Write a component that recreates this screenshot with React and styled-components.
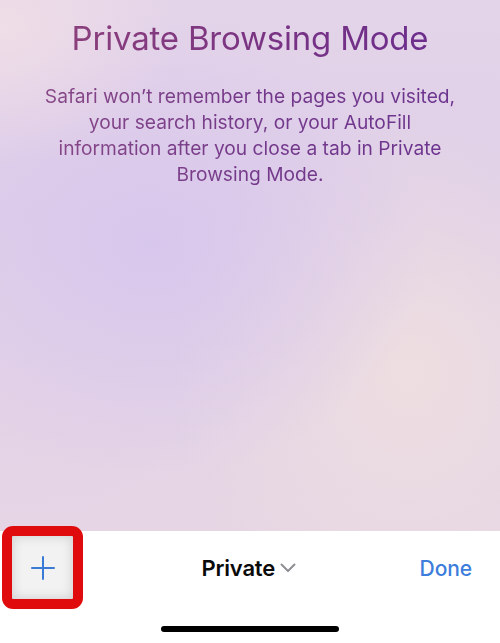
import React from "react";
import styled, { createGlobalStyle } from "styled-components";

const GlobalStyle = createGlobalStyle`
  html, body {
    margin: 0;
    padding: 0;
    background: #ffffff;
  }
  body {
    font-family: 'Inter', 'Liberation Sans', sans-serif;
  }
`;

const Screen = styled.div`
  width: 500px;
  height: 643px;
  display: flex;
  flex-direction: column;
  overflow: hidden;
  position: relative;
`;

const Backdrop = styled.div`
  flex: 1;
  display: flex;
  flex-direction: column;
  align-items: center;
  padding-top: 16px;
  background:
    radial-gradient(ellipse 180px 140px at 0% 5%, rgba(240, 222, 230, 0.9), rgba(240, 222, 230, 0) 100%),
    radial-gradient(ellipse 280px 230px at 30% 46%, rgba(216, 199, 236, 1), rgba(216, 199, 236, 0) 100%),
    radial-gradient(ellipse 240px 260px at 82% 70%, rgba(238, 222, 224, 1), rgba(238, 222, 224, 0) 100%),
    radial-gradient(ellipse 200px 160px at 0% 78%, rgba(228, 210, 230, 0.9), rgba(228, 210, 230, 0) 100%),
    linear-gradient(180deg, #e4d4e9 0%, #dfcfe8 40%, #e6d6e4 100%);
`;

const Title = styled.h1`
  margin: 0;
  font-size: 33px;
  font-weight: 400;
  line-height: 44px;
  letter-spacing: -0.2px;
  background: linear-gradient(90deg, #8a3f7c 0%, #7a3482 50%, #6c2d8c 100%);
  -webkit-background-clip: text;
  background-clip: text;
  color: transparent;
`;

const Message = styled.p`
  margin: 23px 0 0;
  width: 480px;
  text-align: center;
  font-size: 19.2px;
  line-height: 26px;
  font-weight: 400;
  background: linear-gradient(90deg, #8a4a86 0%, #74398a 50%, #6a3390 100%);
  -webkit-background-clip: text;
  background-clip: text;
  color: transparent;
`;

const Toolbar = styled.div`
  height: 112px;
  background: #ffffff;
  display: flex;
  flex-direction: column;
  align-items: center;
`;

const ToolRow = styled.div`
  width: 100%;
  height: 74px;
  display: flex;
  align-items: center;
  justify-content: space-between;
  padding: 0 28px 0 24px;
  box-sizing: border-box;
`;

const IconButton = styled.button`
  width: 34px;
  height: 34px;
  border: none;
  background: none;
  padding: 0;
`;

const GroupPicker = styled.div`
  display: flex;
  align-items: center;
  gap: 5px;
  margin-left: 20px;
`;

const GroupLabel = styled.span`
  font-size: 22px;
  font-weight: 600;
  color: #0a0a0a;
  letter-spacing: -0.2px;
`;

const DoneButton = styled.span`
  font-size: 21px;
  font-weight: 500;
  color: #3d7ddb;
  letter-spacing: -0.1px;
`;

const HomeIndicator = styled.div`
  margin-top: 21px;
  width: 178px;
  height: 6px;
  border-radius: 3px;
  background: #000000;
`;

const Highlight = styled.div`
  position: absolute;
  left: 2px;
  top: 526px;
  width: 81px;
  height: 83px;
  box-sizing: border-box;
  border: 10px solid #e00b0d;
  border-radius: 11px;
  background: #f2f2f2;
  box-shadow: inset 0 0 12px rgba(0, 0, 0, 0.16);
  display: flex;
  align-items: center;
  justify-content: center;
`;

const PlusIcon = () => (
  <svg width="24" height="24" viewBox="0 0 24 24">
    <path d="M12 1v22M1 12h22" stroke="#3b7bd6" strokeWidth="2" strokeLinecap="round" fill="none" />
  </svg>
);

const Chevron = () => (
  <svg width="16" height="10" viewBox="0 0 16 10">
    <path d="M1.5 1.5L8 8l6.5-6.5" stroke="#8e8e93" strokeWidth="2" strokeLinecap="round" strokeLinejoin="round" fill="none" />
  </svg>
);

export default function App() {
  return (
    <>
      <GlobalStyle />
      <Screen>
        <Backdrop>
          <Title>Private Browsing Mode</Title>
          <Message>
            Safari won’t remember the pages you visited,
            <br />
            your search history, or your AutoFill
            <br />
            information after you close a tab in Private
            <br />
            Browsing Mode.
          </Message>
        </Backdrop>
        <Toolbar>
          <ToolRow>
            <IconButton />
            <GroupPicker>
              <GroupLabel>Private</GroupLabel>
              <Chevron />
            </GroupPicker>
            <DoneButton>Done</DoneButton>
          </ToolRow>
          <HomeIndicator />
        </Toolbar>
        <Highlight>
          <PlusIcon />
        </Highlight>
      </Screen>
    </>
  );
}
